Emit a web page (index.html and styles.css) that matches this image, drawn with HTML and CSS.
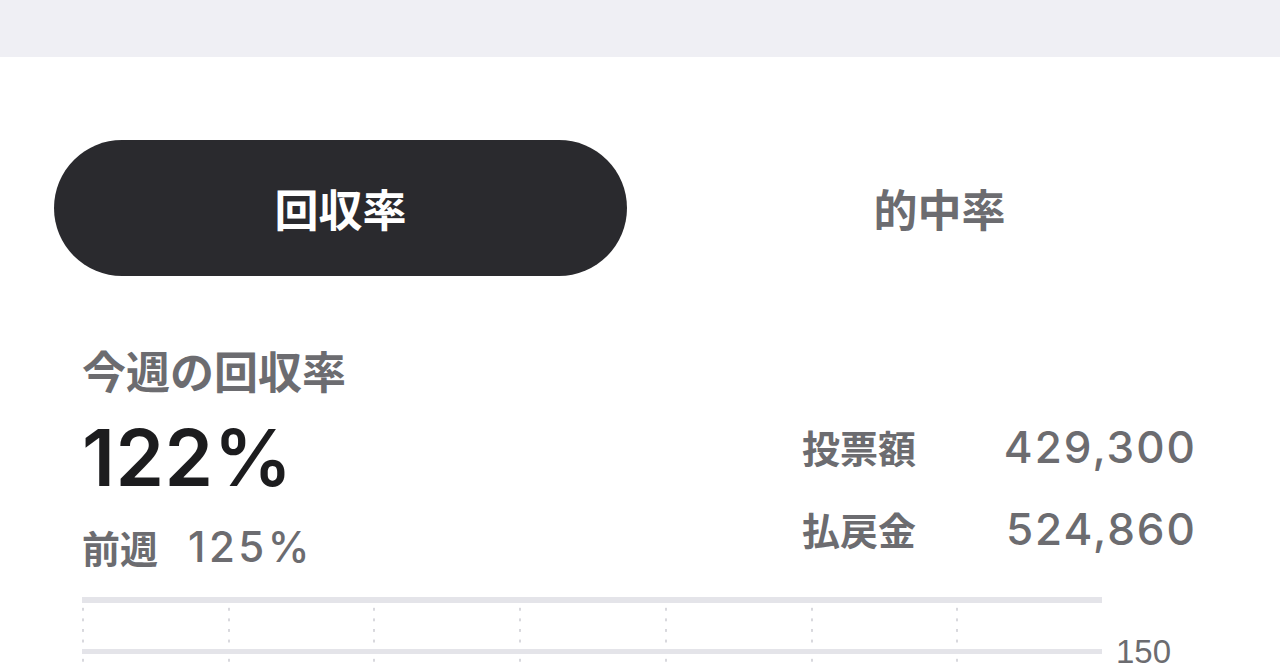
FILE: index.html
```html
<!DOCTYPE html>
<html lang="ja">
<head>
    <meta charset="UTF-8">
    <meta name="viewport" content="width=device-width, initial-scale=1.0">
    <title>回収率</title>
    <link rel="stylesheet" href="styles.css">
</head>
<body>
    <div class="top-bar"></div>
    <main class="page">
        <div class="segment">
            <button class="segment-btn active">回収率</button>
            <button class="segment-btn">的中率</button>
        </div>

        <section class="summary">
            <div class="summary-left">
                <div class="summary-title">今週の回収率</div>
                <div class="summary-rate">122%</div>
                <div class="summary-prev">
                    <span class="prev-label">前週</span>
                    <span class="prev-value">125%</span>
                </div>
            </div>
            <div class="summary-right">
                <div class="stat-row">
                    <span class="stat-label">投票額</span>
                    <span class="stat-value">429,300</span>
                </div>
                <div class="stat-row">
                    <span class="stat-label">払戻金</span>
                    <span class="stat-value">524,860</span>
                </div>
            </div>
        </section>

        <div class="chart">
            <div class="grid-row top">
                <div class="grid-line"></div>
                <span class="grid-label"></span>
            </div>
            <div class="grid-band">
                <div class="grid-col"></div>
                <div class="grid-col"></div>
                <div class="grid-col"></div>
                <div class="grid-col"></div>
                <div class="grid-col"></div>
                <div class="grid-col"></div>
                <div class="grid-col"></div>
            </div>
            <div class="grid-row">
                <div class="grid-line"></div>
                <span class="grid-label">150</span>
            </div>
            <div class="grid-band">
                <div class="grid-col"></div>
                <div class="grid-col"></div>
                <div class="grid-col"></div>
                <div class="grid-col"></div>
                <div class="grid-col"></div>
                <div class="grid-col"></div>
                <div class="grid-col"></div>
            </div>
        </div>
    </main>
</body>
</html>
```

FILE: styles.css
```css
body {
    margin: 0;
    background: #fff;
    font-family: 'Noto Sans CJK JP', 'Noto Sans', sans-serif;
    color: #1c1c1e;
    overflow: hidden;
}
.top-bar {
    height: 57px;
    background: #efeff4;
}
.page {
    padding: 83px 54px 0;
}

/* segmented control */
.segment {
    display: flex;
    gap: 26px;
}
.segment-btn {
    flex: 1;
    height: 136px;
    border: none;
    border-radius: 68px;
    background: transparent;
    font-family: 'Noto Sans CJK JP', sans-serif;
    font-size: 44px;
    font-weight: bold;
    color: #6c6c70;
    padding: 0;
    cursor: pointer;
}
.segment-btn.active {
    background: #2a2a2e;
    color: #fff;
}

/* summary */
.summary {
    display: flex;
    justify-content: space-between;
    align-items: flex-start;
    padding: 0 31px 0 28px;
    margin-top: 72px;
}
.summary-title {
    font-size: 44px;
    line-height: 44px;
    font-weight: bold;
    color: #6c6c70;
}
.summary-rate {
    font-family: 'Inter', sans-serif;
    font-size: 78px;
    line-height: 78px;
    font-weight: 600;
    color: #1c1c1e;
    margin-top: 27px;
    letter-spacing: 0.5px;
}
.summary-prev {
    display: flex;
    align-items: center;
    gap: 30px;
    margin-top: 30px;
    height: 39px;
}
.prev-label {
    font-size: 38px;
    font-weight: bold;
    color: #6c6c70;
}
.prev-value {
    font-family: 'Inter', sans-serif;
    font-size: 42px;
    font-weight: 500;
    color: #6c6c70;
    letter-spacing: 3.5px;
}
.summary-right {
    margin-top: 74px;
    display: flex;
    flex-direction: column;
    gap: 34px;
}
.stat-row {
    display: flex;
    align-items: center;
    justify-content: space-between;
    width: 393px;
    height: 48px;
}
.stat-label {
    font-size: 38px;
    font-weight: bold;
    color: #6c6c70;
}
.stat-value {
    font-family: 'Inter', sans-serif;
    font-size: 44px;
    font-weight: 500;
    color: #6c6c70;
    letter-spacing: 2px;
    margin-right: -2px;
    padding-top: 2px;
}

/* chart */
.chart {
    margin-top: 31px;
    padding-left: 28px;
}
.grid-row {
    display: flex;
    align-items: center;
    height: 5px;
}
.grid-row.top {
    height: 6px;
}
.grid-line {
    width: 1020px;
    height: 100%;
    background: #e4e4e9;
}
.grid-label {
    margin-left: 14px;
    font-family: 'Liberation Sans', Arial, sans-serif;
    font-size: 33px;
    line-height: 33px;
    color: #6c6c70;
}
.grid-band {
    display: flex;
    width: 1020px;
    height: 46px;
}
.grid-col {
    flex: 1;
    background-image: linear-gradient(to bottom, transparent 5px, #d8d8dd 5px, #d8d8dd 8px, transparent 8px);
    background-size: 2px 10.6px;
    background-repeat: repeat-y;
    background-position: left top;
}
```
